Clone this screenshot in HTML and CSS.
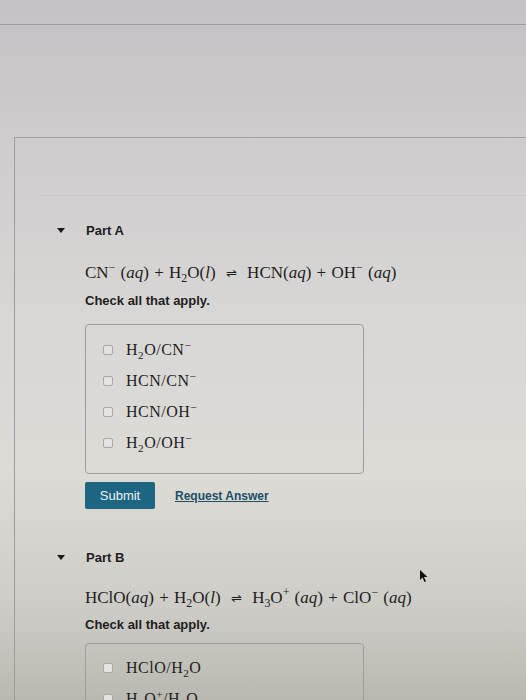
FILE: index.html
```html
<!DOCTYPE html>
<html lang="en">
<head>
    <meta charset="UTF-8">
    <meta name="viewport" content="width=device-width, initial-scale=1.0">
    <title>Acid-Base Pairs</title>
    <link rel="stylesheet" href="styles.css">
</head>
<body>
    <div class="topbar"></div>
    <div class="band"></div>

    <div class="panel">
        <!-- Part A -->
        <section class="part first">
            <div class="part-head">
                <span class="caret"></span>
                <span class="part-title">Part A</span>
            </div>
            <div class="part-body">
                <div class="eq">CN<sup>&minus;</sup> (<i>aq</i>) + H<sub>2</sub>O(<i>l</i>) <span class="arrows">&#8652;</span> HCN(<i>aq</i>) + OH<sup>&minus;</sup> (<i>aq</i>)</div>
                <div class="hint">Check all that apply.</div>
                <div class="choices">
                    <label class="choice"><span class="box"></span><span class="chem">H<sub>2</sub>O/CN<sup>&minus;</sup></span></label>
                    <label class="choice"><span class="box"></span><span class="chem">HCN/CN<sup>&minus;</sup></span></label>
                    <label class="choice"><span class="box"></span><span class="chem">HCN/OH<sup>&minus;</sup></span></label>
                    <label class="choice"><span class="box"></span><span class="chem">H<sub>2</sub>O/OH<sup>&minus;</sup></span></label>
                </div>
                <div class="actions">
                    <button class="btn submit">Submit</button>
                    <a class="request" href="#">Request Answer</a>
                </div>
            </div>
        </section>

        <!-- Part B -->
        <section class="part compact">
            <div class="part-head">
                <span class="caret"></span>
                <span class="part-title">Part B</span>
            </div>
            <div class="part-body">
                <div class="eq">HClO(<i>aq</i>) + H<sub>2</sub>O(<i>l</i>) <span class="arrows">&#8652;</span> H<sub>3</sub>O<sup>+</sup> (<i>aq</i>) + ClO<sup>&minus;</sup> (<i>aq</i>)</div>
                <div class="hint">Check all that apply.</div>
                <div class="choices short">
                    <label class="choice"><span class="box"></span><span class="chem">HClO/H<sub>2</sub>O</span></label>
                    <label class="choice"><span class="box"></span><span class="chem">H<sub>3</sub>O<sup>+</sup>/H<sub>2</sub>O</span></label>
                </div>
            </div>
        </section>
    </div>

    <!-- mouse pointer -->
    <svg class="pointer" width="10" height="14" viewBox="0 0 10 14">
        <path d="M1 1 L1 11 L3.5 8.5 L5.5 13 L7 12.3 L5 8 L8.5 8 Z" fill="#111"/>
    </svg>
</body>
</html>
```

FILE: styles.css
```css
body {
    margin: 0;
    height: 700px;
    overflow: hidden;
    font-family: "Liberation Sans", Arial, sans-serif;
    color: #1e1e1e;
    background: linear-gradient(to bottom, #c4c2c4 0, #cecccd 140px, #d9d7d5 320px, #dcdbd6 470px, #cfcdc7 600px, #b9b8b1 700px);
    position: relative;
}
.topbar {
    height: 24px;
    border-bottom: 1px solid #9c9a9c;
}
.band {
    height: 112px;
}
.panel {
    margin-left: 14px;
    border-left: 1px solid #9d9c9c;
    border-top: 1px solid #a3a2a2;
    padding-top: 57px;
    min-height: 600px;
}
.part {
    margin-left: 26px;
    padding-left: 16px;
    padding-top: 40px;
}
.part.first {
    border-top: 1px solid #c9c8c7;
    padding-top: 26px;
}
.part-head {
    display: flex;
    align-items: center;
    height: 16px;
}
.caret {
    width: 0;
    height: 0;
    border-left: 4px solid transparent;
    border-right: 4px solid transparent;
    border-top: 5px solid #1a1a1a;
    margin-right: 21px;
}
.part-title {
    font-size: 13px;
    font-weight: bold;
}
.part-body {
    margin-left: 28px;
}
.eq {
    font-family: "Liberation Serif", "Times New Roman", serif;
    font-size: 17px;
    line-height: 24px;
    margin-top: 23px;
    word-spacing: 1px;
}
.eq i, .chem i {
    font-style: italic;
}
sup, sub {
    font-size: 70%;
    line-height: 0;
}
.arrows {
    font-size: 13px;
    margin: 0 5px;
}
.hint {
    font-size: 13px;
    font-weight: bold;
    line-height: 16px;
    margin-top: 7px;
}
.choices {
    width: 277px;
    margin-top: 15px;
    border: 1px solid #9e9d9b;
    border-radius: 4px;
    padding: 9px 0 15px;
}
.choices.short {
    height: 80px;
}
/* second part sits a little tighter */
.compact .eq {
    margin-top: 21px;
}
.compact .hint {
    margin-top: 6px;
}
.compact .choices {
    margin-top: 10px;
    padding-top: 8px;
}
.choice {
    display: flex;
    align-items: center;
    height: 31px;
    padding-left: 17px;
}
.box {
    width: 8px;
    height: 8px;
    border: 1px solid #a9a8a5;
    border-radius: 2px;
    background: #e4e3df;
    margin-right: 13px;
}
.chem {
    font-family: "Liberation Serif", "Times New Roman", serif;
    font-size: 16px;
    letter-spacing: 0.5px;
}
.actions {
    display: flex;
    align-items: center;
    margin-top: 8px;
}
.btn {
    border: none;
    cursor: pointer;
    font-family: inherit;
}
.submit {
    width: 70px;
    height: 27px;
    border-radius: 2px;
    background-color: #1d6681;
    color: #eef2f2;
    font-size: 13px;
}
.request {
    margin-left: 20px;
    font-size: 12px;
    font-weight: bold;
    color: #1d4f66;
    text-decoration: underline;
}
.pointer {
    position: absolute;
    left: 419px;
    top: 569px;
}
```
